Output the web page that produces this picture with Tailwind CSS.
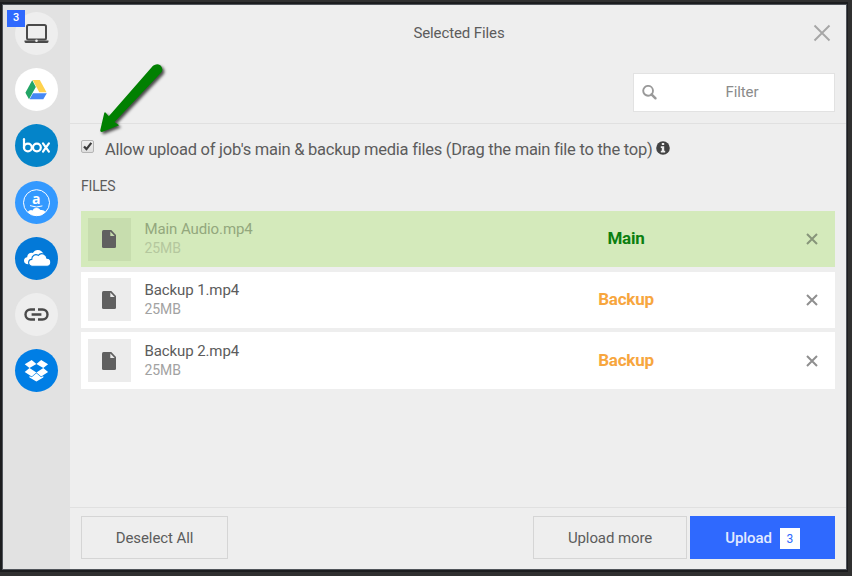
<!DOCTYPE html>
<html lang="en">
<head>
    <meta charset="UTF-8">
    <meta name="viewport" content="width=device-width, initial-scale=1.0">
    <title>Selected Files</title>
    <script src="https://cdn.jsdelivr.net/npm/@tailwindcss/browser@4"></script>
</head>
<body class="bg-[#1c1d1f] font-['Roboto',sans-serif] text-[15px] tracking-[-0.1px] text-[#5c5c5c]">
    <div class="relative w-[852px] h-[576px] overflow-hidden border-t-2 border-r-4 border-b-4 border-[#303030] pt-[3px] pl-[3px]">
        <!-- Upload dialog -->
        <div class="flex w-[843px] h-[564px] bg-[#eee] shadow-[0_0_0_1px_#50545a]">
            <!-- Sources sidebar -->
            <div class="relative w-[67px] shrink-0 bg-[#e2e2e2] pt-[7px] pl-3 flex flex-col gap-[13.2px]">
                <div class="size-[43px] shrink-0 rounded-full bg-[#eee]">
                    <svg class="size-full" viewBox="0 0 43 43" fill="#4a4a4a">
                        <rect x="12" y="13" width="19" height="14.5" rx="1.5" fill="none" stroke="#4a4a4a" stroke-width="2"/>
                        <path d="M9.500 28.600h24v.8q0 1.600-1.700 1.600H11.200q-1.700 0-1.700-1.600z"/>
                        <circle cx="21.500" cy="28.800" r="1.300" fill="#eee"/>
                    </svg>
                </div>
                <div class="size-[43px] shrink-0 rounded-full bg-white">
                    <svg class="size-full" viewBox="0.6 0 43 43">
                        <path fill="#23a566" d="M17.800 12.300L11 24.800l3.600 6.400 6.800-12.300z"/>
                        <path fill="#ffd24d" d="M18.300 12h7.100l6.700 12.300h-7.200z"/>
                        <path fill="#4688f4" d="M18.600 25.200h13.800l-3.500 6H15.200z"/>
                    </svg>
                </div>
                <div class="size-[43px] shrink-0 rounded-full bg-[#0484c9]">
                    <svg class="size-full" viewBox="0 0 43 43" fill="none" stroke="#fff" stroke-width="2.200" stroke-linecap="round">
                        <path d="M9 15.200v8.700"/>
                        <circle cx="12.900" cy="23.500" r="3.900"/>
                        <circle cx="21.900" cy="23.500" r="3.900"/>
                        <path d="M28 19.300l5.900 8.400M33.900 19.300L28 27.700"/>
                    </svg>
                </div>
                <div class="size-[43px] shrink-0 rounded-full bg-[#3399ff]">
                    <svg class="size-full" viewBox="0 0 43 43">
                        <circle cx="21.500" cy="21.700" r="13" fill="none" stroke="#fff" stroke-width="1"/>
                        <text x="21.300" y="23.400" text-anchor="middle" class="font-['Open_Sans',sans-serif] text-[14px] font-bold" fill="#fff">a</text>
                        <path d="M15 24.600q6.500 2.700 12.400.3" fill="none" stroke="#fff" stroke-width="1"/>
                        <path fill="#fff" d="M12.500 31q2.600-2.800 5-1.600 1.300-2.600 4-2.300 2.600-.3 3.900 2 3-.9 5.200 1.800-3.600 3.900-9 3.900t-9.100-3.800z"/>
                    </svg>
                </div>
                <div class="size-[43px] shrink-0 rounded-full bg-[#0379d8]">
                    <svg class="size-full" viewBox="0 0 43 43">
                        <path fill="#fff" d="M13 27.200c-2.200 0-4-1.500-4-3.500 0-1.900 1.300-3.300 3.200-3.400-.1-2.600 1.700-4.600 4.200-4.600.6 0 1 .1 1.500.3 1.200-2 3-3 5-2.900 2.700 0 4.800 1.700 5.500 4l1 6-12 4z"/>
                        <path fill="#fff" stroke="#0379d8" stroke-width="1.100" d="M17.300 29.200c-2.200 0-3.700-1.500-3.700-3.400 0-2 1.400-3.300 3.200-3.400-.2-3.900 3.700-6 6.500-4 2.700-3.300 8.200-1.600 8.600 2.900 2.200 0 3.900 1.700 3.900 3.900 0 2.300-1.700 4-3.700 4z"/>
                    </svg>
                </div>
                <div class="size-[43px] shrink-0 rounded-full bg-[#eee]">
                    <svg class="size-full" viewBox="0 0 43 43" fill="none" stroke="#4a4a4a" stroke-width="2.400">
                        <path d="M20 16.500h-4.500a5 5 0 0 0 0 10H20M23 16.500h4.500a5 5 0 0 1 0 10H23M16.600 21.500h9.800"/>
                    </svg>
                </div>
                <div class="size-[43px] shrink-0 rounded-full bg-[#007ee5]">
                    <svg class="size-full" viewBox="0 0 43 43" fill="#fff">
                        <path d="M16.700 10.900l4.700 4-6.900 4.200-4.800-3.800zM26.200 10.900l-4.800 4 6.900 4.200 4.800-3.800zM14.500 19.100l6.900 4.300-4.700 4-7-4.500zM28.300 19.100l-6.900 4.300 4.800 4 6.900-4.500z"/>
                        <path d="M21.400 24.300l4.800 4 2.100-1.400v1.500l-6.900 4.200-6.900-4.200v-1.500l2.100 1.400z"/>
                    </svg>
                </div>
                <!-- Selected count -->
                <div class="absolute left-1 top-[5px] w-[18px] h-[17px] bg-[#2f69fe] text-white text-[11px] font-medium flex items-center justify-center">3</div>
            </div>

            <!-- Main panel -->
            <div class="flex-1 flex flex-col">
                <div class="h-[119px] shrink-0 border-b border-[#e0e0e0] pr-[11px]">
                    <div class="h-[68px] pt-[17px] flex justify-between">
                        <div class="flex-1 pl-[11px] text-center leading-[22px] -mr-[24px]">Selected Files</div>
                        <svg class="size-[18px] mr-1 mt-[2px]" viewBox="0 0 18 18" fill="none" stroke="#a6a6a6" stroke-width="1.900"><path d="M1.500 1.500l15 15M16.500 1.500l-15 15"/></svg>
                    </div>
                    <div class="ml-auto w-[202px] h-[39px] bg-white border border-[#e2e2e2] flex items-center pl-2">
                        <svg class="size-[16px]" viewBox="0.7 0.7 16 16" fill="none" stroke="#999"><circle cx="6.800" cy="6.500" r="4.900" stroke-width="1.900"/><path d="M10.200 10l4 4" stroke-width="2.400" stroke-linecap="round"/></svg>
                        <div class="flex-1 text-center pr-[8px] text-[#8b8b8b]">Filter</div>
                    </div>
                </div>

                <div class="flex-1 pl-[11px] pr-[11px]">
                    <div class="flex h-[52px] pt-[14px]">
                        <div class="mt-[2px] size-[13px] shrink-0 rounded-[2px] border border-[#b5b5b5] bg-linear-to-b from-[#f0f0f0] to-[#dedede]">
                            <svg class="size-full" viewBox="0 0 11 11" fill="none" stroke="#3c3c3c" stroke-width="2.200"><path d="M2 5.400l2.500 2.700L9.300 1.900"/></svg>
                        </div>
                        <div class="ml-[11px] mt-px text-[16.500px] leading-[22px] tracking-[-0.250px] whitespace-nowrap">Allow upload of job's main &amp; backup media files (Drag the main file to the top)</div>
                        <svg class="ml-1 mt-[3px] size-[14px] shrink-0" viewBox="0 0 14 14"><circle cx="7" cy="7" r="6.800" fill="#424242"/><path fill="#eee" d="M5.800 2h2.400v2.100H5.800zM4.800 5.300h3.400v4.500h1v1.700H4.800V9.800h1V7h-1z"/></svg>
                    </div>
                    <div class="h-[35px] text-[14px] leading-[21px] tracking-[-0.200px]">FILES</div>

                    <!-- File rows -->
                    <div class="flex flex-col gap-[4.500px]">
                        <div class="flex items-center h-[56px] bg-[#d4eabb] pl-[7px]">
                            <div class="size-[43px] bg-[#c7ddae] flex items-center pl-[14px]">
                                <svg class="w-[14px] h-[18px]" viewBox="0 0 14 18"><path fill="#606060" d="M1.500 0h7.800L14 5v11.500q0 1.500-1.500 1.500h-11Q0 18 0 16.500v-15Q0 0 1.500 0z"/><path fill="#c7ddae" d="M8.300 1.500v4.400h4.400z"/></svg>
                            </div>
                            <div class="ml-[13.500px] w-[399.500px]">
                                <div class="leading-[20px] text-[#93a77d] -mt-px">Main Audio.mp4</div>
                                <div class="text-[14px] leading-[19px] text-[#b4c79e]">25MB</div>
                            </div>
                            <div class="w-[164px] text-center text-[17px] font-bold tracking-[-0.250px] text-[#0b7f10]">Main</div>
                            <svg class="ml-auto mr-[17.500px] size-[12px]" viewBox="0 0 12 12" fill="none" stroke="#87957a" stroke-width="2"><path d="M1 1l10 10M11 1L1 11"/></svg>
                        </div>
                        <div class="flex items-center h-[56px] bg-white pl-[7px]">
                            <div class="size-[43px] bg-[#ececec] flex items-center pl-[14px]">
                                <svg class="w-[14px] h-[18px]" viewBox="0 0 14 18"><path fill="#606060" d="M1.500 0h7.800L14 5v11.500q0 1.500-1.500 1.500h-11Q0 18 0 16.500v-15Q0 0 1.500 0z"/><path fill="#ececec" d="M8.300 1.500v4.400h4.400z"/></svg>
                            </div>
                            <div class="ml-[13.500px] w-[399.500px]">
                                <div class="leading-[20px]">Backup 1.mp4</div>
                                <div class="text-[14px] leading-[19px] text-[#a2a2a2]">25MB</div>
                            </div>
                            <div class="w-[164px] text-center text-[17px] font-bold tracking-[-0.250px] text-[#f7a63e]">Backup</div>
                            <svg class="ml-auto mr-[17.500px] size-[12px]" viewBox="0 0 12 12" fill="none" stroke="#8f8f8f" stroke-width="2"><path d="M1 1l10 10M11 1L1 11"/></svg>
                        </div>
                        <div class="flex items-center h-[57px] bg-white pl-[7px]">
                            <div class="size-[43px] bg-[#ececec] flex items-center pl-[14px]">
                                <svg class="w-[14px] h-[18px]" viewBox="0 0 14 18"><path fill="#606060" d="M1.500 0h7.800L14 5v11.500q0 1.500-1.500 1.500h-11Q0 18 0 16.500v-15Q0 0 1.500 0z"/><path fill="#ececec" d="M8.300 1.500v4.400h4.400z"/></svg>
                            </div>
                            <div class="ml-[13.500px] w-[399.500px]">
                                <div class="leading-[20px]">Backup 2.mp4</div>
                                <div class="text-[14px] leading-[19px] text-[#a2a2a2]">25MB</div>
                            </div>
                            <div class="w-[164px] text-center text-[17px] font-bold tracking-[-0.250px] text-[#f7a63e]">Backup</div>
                            <svg class="ml-auto mr-[17.500px] size-[12px]" viewBox="0 0 12 12" fill="none" stroke="#8f8f8f" stroke-width="2"><path d="M1 1l10 10M11 1L1 11"/></svg>
                        </div>
                    </div>
                </div>

                <!-- Footer buttons -->
                <div class="h-[62px] shrink-0 border-t border-[#e0e0e0] pt-2 px-[11px] flex">
                    <button class="w-[147px] h-[43px] pt-[2px] border border-[#d5d5d5]">Deselect All</button>
                    <button class="ml-auto w-[154px] h-[43px] pt-[2px] border border-[#d5d5d5]">Upload more</button>
                    <button class="ml-[3px] w-[145px] h-[43px] pt-[2px] bg-[#2f69fe] text-[#e3ebff] font-medium flex items-center justify-center">
                        Upload
                        <span class="ml-2 w-[20px] h-[21px] bg-white text-[#2f69fe] text-[12px] font-normal flex items-center justify-center">3</span>
                    </button>
                </div>
            </div>
        </div>

        <!-- Arrow pointing at the checkbox -->
        <svg class="absolute left-[90px] top-[54px] w-[84px] h-[84px] drop-shadow-[2px_2px_1.500px_rgba(0,0,0,0.7)]" viewBox="90 56 84 84" fill="#018001">
            <path d="M153 65.800Q156.800 62.800 160.300 65.300 163.900 68.800 161.300 72.400L114.500 122 119.200 125.200 102 132Q100 132 100.300 130L104.300 112.800Q105 111.600 106 113L108.800 116.300z"/>
        </svg>
    </div>
</body>
</html>
